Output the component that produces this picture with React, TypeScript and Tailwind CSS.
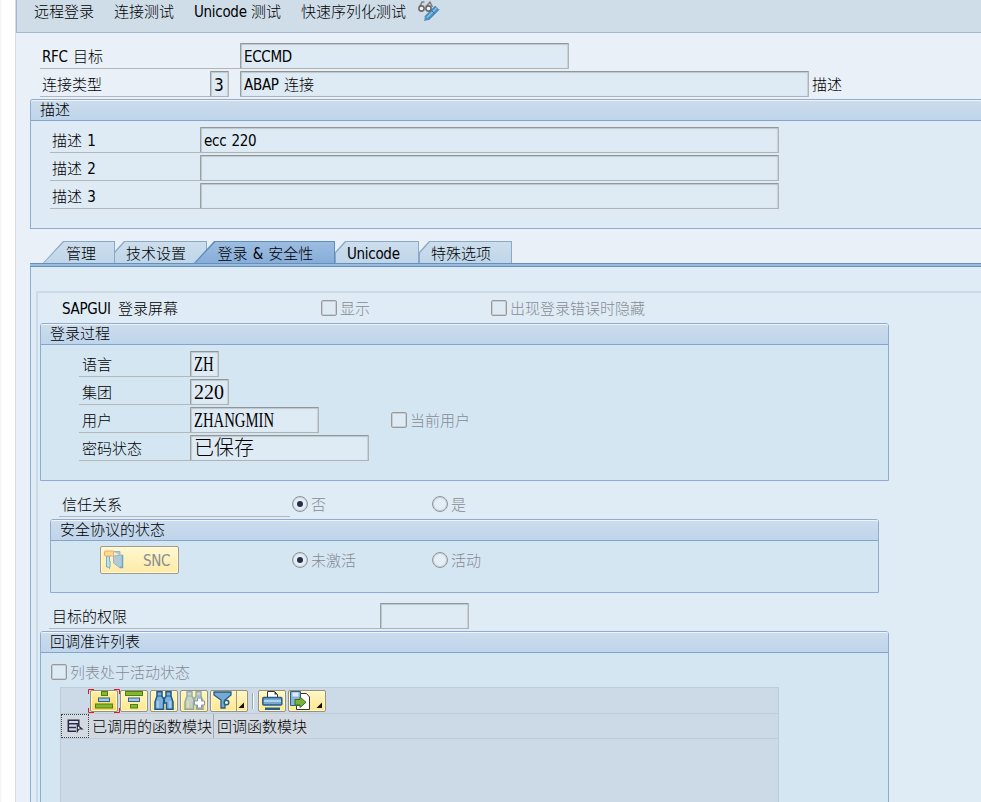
import type { ReactNode } from 'react'
import clsx from 'clsx'

// Latin runs are set slightly tighter than the CJK text around them
function Text({ children, className }: { children: string; className?: string }) {
  const parts = children.split(/([\x21-\x7e]+)/)
  return (
    <span className={clsx('whitespace-pre', className)}>
      {parts.map((part, i) => (i % 2 ? <span key={i} className="tracking-[-0.3px]">{part}</span> : part))}
    </span>
  )
}

interface FieldProps {
  value?: string
  className: string
  serif?: boolean
}

function Field({ value = '', className, serif }: FieldProps) {
  return (
    <div
      className={clsx(
        'flex h-[26px] shrink-0 items-center rounded-[1px] border border-[#b0b2b4] border-t-[#919798] border-l-[#999ea0] bg-[#deebf5] pl-[3px] shadow-[inset_1px_1px_1px_#bcc8d0,inset_-1px_0_1px_#c8d0d6]',
        className,
      )}
    >
      {serif ? (
        <span
          className={clsx(
            'origin-left font-["Liberation_Serif","Noto_Sans_CJK_SC",serif] text-[20px] whitespace-pre',
            /^[A-Z]+$/.test(value) && 'scale-x-[0.735]',
          )}
        >
          {value}
        </span>
      ) : (
        <Text className="pt-[2px] [word-spacing:1px]">{value}</Text>
      )}
    </div>
  )
}

function Label({ children, className }: { children: string; className: string }) {
  return (
    <div className={clsx('flex h-[26px] shrink-0 items-center border-b border-[#b4b6b8] pt-[2px]', className)}>
      <Text className="[word-spacing:1px]">{children}</Text>
    </div>
  )
}

function Check({ label, className }: { label: string; className?: string }) {
  return (
    <div className={clsx('flex h-[26px] shrink-0 items-center gap-[3px] text-[#868b94]', className)}>
      <span className="size-4 rounded-[2px] border border-[#999] bg-[#deebf5] shadow-[inset_0_0_0_1px_#c8ced4]" />
      <Text className="pt-px">{label}</Text>
    </div>
  )
}

function Radio({ label, checked, className }: { label: string; checked?: boolean; className?: string }) {
  return (
    <div className={clsx('flex h-[26px] shrink-0 items-center gap-[3px] text-[#868b94]', className)}>
      <span className="flex size-4 items-center justify-center rounded-full border border-[#8d939a] bg-[#e4eef7] shadow-[inset_0_0_0_1px_#cbd2d8]">
        {checked && <span className="size-1.5 rounded-full bg-[#2b2b47]" />}
      </span>
      <Text className="pt-px">{label}</Text>
    </div>
  )
}

function Group({ title, className, children }: { title: string; className?: string; children: ReactNode }) {
  return (
    <section className={clsx('rounded-t-[3px] border border-[#8facd0]', className)}>
      <h2 className="flex h-[21px] items-center rounded-t-[2px] border-b border-[#84a5cb] bg-linear-to-b from-[#ccdcec] to-[#bfd5eb] pl-[9px] shadow-[inset_0_1px_0_#eef4fa]">
        <Text>{title}</Text>
      </h2>
      {children}
    </section>
  )
}

interface TabProps {
  label: string
  className: string
  active?: boolean
  first?: boolean
}

function Tab({ label, className, active, first }: TabProps) {
  const wide = active || first
  const shape = wide
    ? '[clip-path:polygon(0_100%,21px_0,100%_0,100%_100%)]'
    : '[clip-path:polygon(0_11px,10px_0,100%_0,100%_100%,0_100%)]'
  return (
    <div
      className={clsx(
        'h-[23px] shrink-0 pt-px pr-px',
        shape,
        active ? 'relative bg-[#5f8fc0] pl-[1.5px]' : 'bg-[#8aa9c6] pl-px',
        className,
      )}
    >
      <div
        className={clsx(
          'flex h-full items-center bg-linear-to-b pt-[2px]',
          shape,
          active ? 'from-[#9dbde0] to-[#86acd8]' : 'from-[#cddeed] to-[#bfd5e9]',
          wide ? 'pl-[23px]' : 'pl-[11px]',
        )}
      >
        <Text className="[word-spacing:1px]">{label}</Text>
      </div>
    </div>
  )
}

function ToolButton({ children, className, focused }: { children: ReactNode; className?: string; focused?: boolean }) {
  return (
    <button
      className={clsx(
        'flex h-[22px] shrink-0 items-start rounded-[2px] border border-[#98917c] shadow-[inset_0_0_0_1px_#fff8cf]',
        focused ? 'bg-linear-to-b from-[#fff0a8] to-[#ffd458]' : 'bg-linear-to-b from-[#fff7c6] to-[#ffe78e]',
        className,
      )}
    >
      {children}
    </button>
  )
}

function GlassesPencil() {
  return (
    <svg width="22" height="22" viewBox="0 0 22 22" fill="none" className="-mt-[2px]">
      <path d="M2 6.500 4 2h2.500M8 6.500l4-4.500 2.500 5" stroke="#808080" strokeWidth="1.500" />
      <circle cx="3.500" cy="8.500" r="2.600" fill="#f5f5f5" stroke="#6b6b6b" strokeWidth="1.600" />
      <circle cx="10.500" cy="8.500" r="2.600" fill="#f5f5f5" stroke="#6b6b6b" strokeWidth="1.600" />
      <path d="M7 16.500 17.500 6l3.500 3.500L10.500 20 6 21z" fill="#4d94c6" />
      <path d="M7 16.500 17.500 6M10.500 20 21 9.500" stroke="#2a73a8" />
      <path d="M9 17.500 18.500 8" stroke="#8dc0e2" strokeWidth="1.500" />
      <path d="m13 10 4 4" stroke="#2a73a8" />
    </svg>
  )
}

function KeysIcon() {
  return (
    <svg width="20" height="20" viewBox="0 0 20 20">
      <path d="M9 1.500h7v4M18.500 5v12l-3 .5-6-4.500V6z" fill="#b4c9da" stroke="#9fb3c0" />
      <path d="M18.500 5v12.500h-3" fill="none" stroke="#69a8c8" strokeWidth="1.500" />
      <path d="M2.500 6v11h2l1 1.500V17l1-1-1-1 1-1-1-1 1-1-1-1V6z" fill="#c6e0ea" stroke="#6fafc9" />
      <rect x=".5" y="1" width="9" height="5" rx="1" fill="#ffdb8c" stroke="#eba873" />
    </svg>
  )
}

function Binoculars({ plus }: { plus?: boolean }) {
  return (
    <svg width="26" height="20" viewBox="0 0 26 20">
      <g opacity={plus ? 0.45 : 1}>
        <path
          d="M6 .7h5V5l1 2h2l1-2V.7h5V5l2 6v7.300h-6.500V12h-3v6.300H4V11l2-6z"
          fill="#7fb0dc"
          stroke="#1c598c"
          strokeWidth="1.500"
        />
        <path d="M6 5h5M15 5h5M12.500 7v5h1V7" stroke="#1c598c" fill="none" />
        <path d="M7 10v7M19 10v7" stroke="#b5d3ea" strokeWidth="1.500" />
      </g>
      {plus && <path d="M16.500 7h4v3h3v4h-3v3h-4v-3h-3v-4h3z" fill="#fff" stroke="#8195b5" />}
    </svg>
  )
}

function SortIcon({ down }: { down?: boolean }) {
  return (
    <svg width="26" height="20" viewBox="0 0 26 20">
      {down ? (
        <>
          <rect x="4.500" y=".5" width="17" height="4" fill="#86b82c" stroke="#4c801d" />
          <rect x="7.500" y="7" width="11" height="3.500" fill="#a6c5e2" stroke="#2b648d" />
          <rect x="9.500" y="13.500" width="7" height="3.500" fill="#86b82c" stroke="#4c801d" />
        </>
      ) : (
        <>
          <rect x="10.500" y=".5" width="6" height="4" fill="#86b82c" stroke="#4c801d" />
          <rect x="7.500" y="7" width="11" height="3.500" fill="#a6c5e2" stroke="#2b648d" />
          <rect x="4.500" y="13" width="17" height="4" fill="#86b82c" stroke="#4c801d" />
        </>
      )}
    </svg>
  )
}

function FilterIcon() {
  return (
    <svg width="36" height="20" viewBox="0 0 36 20">
      <path d="M3 1h17v3l-6 5v8h-4V9L3 4z" fill="#77a9d2" stroke="#225e8e" strokeWidth="1.300" />
      <circle cx="15.500" cy="11.500" r="2.300" fill="#f4efcf" stroke="#225e8e" strokeWidth="1.500" />
      <path d="M25.500 0v20" stroke="#a39a78" />
      <path d="M33 11.500v5.500h-5.500z" fill="#111" />
    </svg>
  )
}

function PrinterIcon() {
  return (
    <svg width="26" height="20" viewBox="0 0 26 20">
      <path d="M8.500 6V.5h7l3 3V6" fill="#fff" stroke="#333" />
      <path d="M15.500 0v3.500h3z" fill="#333" />
      <rect x="3.800" y="6.500" width="19" height="7.500" rx="1" fill="#78a8d0" stroke="#225e8e" strokeWidth="1.500" />
      <path d="M5 10h17" stroke="#c7dff1" strokeWidth="1.500" />
      <path d="M6 16.500h15V19H6z" fill="#225e8e" />
    </svg>
  )
}

function ExportIcon() {
  return (
    <svg width="36" height="20" viewBox="0 0 36 20">
      <path d="M7.500 2.500h10l3 3.500v12.500h-13z" fill="#fff" stroke="#333" />
      <path d="M1.500.5h10v14h-10z" fill="#8bb3d8" stroke="#2b648d" />
      <path d="M3.500 1.500h6v4h-6z" fill="#dceaf6" />
      <path d="M6 8.500h5V6l6 5.300-6 5.200V14H6z" fill="#7bb135" stroke="#39701b" />
      <path d="M33 11.500v5.500h-5.500z" fill="#111" />
    </svg>
  )
}

function SelectAllIcon() {
  return (
    <svg width="17" height="14" viewBox="0 0 17 14" fill="none" stroke="#2b2b47" strokeWidth="1.500">
      <path d="M9 12.300H1.300V1.300h10.500V7M1.300 4.800h10.500M1.300 8.500H9" />
      <path d="M10.300 6 15 10h-3l-1.700 2.500z" fill="#fff" strokeWidth="1.200" />
    </svg>
  )
}

const descriptions = ['ecc 220', '', '']

const logonFields = [
  { label: '语言', value: 'ZH', width: 'w-[29px]' },
  { label: '集团', value: '220', width: 'w-[39px]' },
  { label: '用户', value: 'ZHANGMIN', width: 'w-[129px]' },
  { label: '密码状态', value: '已保存', width: 'w-[179px]' },
]

export default function App() {
  return (
    <div className='flex h-[802px] w-[981px] overflow-hidden bg-white font-["DejaVu_Sans_Condensed","Noto_Sans_CJK_SC",sans-serif] text-[15px] leading-5 font-light text-black'>
      <div className="w-4 shrink-0 border-r border-[#d3dce7] bg-linear-to-r from-[#f6f6f6] from-[1px] to-white to-[2px]" />
      <div className="flex min-w-0 flex-1 flex-col bg-[#e9f0f7]">
        <nav className="flex h-[33px] shrink-0 border-b border-l border-[#a3b8d0] bg-[#cfdde8] pt-[2px] pl-[17px]">
          <Text className="w-20">远程登录</Text>
          <Text className="w-20">连接测试</Text>
          <Text className="w-[107px]">Unicode 测试</Text>
          <Text className="w-[117px]">快速序列化测试</Text>
          <GlassesPencil />
        </nav>

        <main className="flex flex-1 flex-col pt-2.5 pl-3.5">
          <div className="flex flex-col gap-0.5 pl-2.5">
            <div className="flex">
              <Label className="w-[200px] pl-[2px]">RFC 目标</Label>
              <Field value="ECCMD" className="w-[329px]" />
            </div>
            <div className="flex">
              <Label className="w-[170px] pl-[2px]">连接类型</Label>
              <Field value="3" className="mr-[11px] w-[19px] text-[17px]" />
              <Field value="ABAP 连接" className="w-[569px]" />
              <Text className="pt-1 pl-[3px]">描述</Text>
            </div>
          </div>

          <Group title="描述" className="mt-0.5 h-[130px] shrink-0 rounded-tr-none border-r-0 bg-[#deeaf4]">
            <div className="flex flex-col gap-0.5 pt-1.5 pl-[19px]">
              {descriptions.map((value, i) => (
                <div key={i} className="flex">
                  <Label className="w-[150px] pl-[2px]">{`描述 ${i + 1}`}</Label>
                  <Field value={value} className="w-[579px]" />
                </div>
              ))}
            </div>
          </Group>

          <div className="mt-3 flex h-[22px] shrink-0 pl-3">
            <Tab label="管理" className="w-[73px]" first />
            <Tab label="技术设置" className="-ml-px w-[93px]" />
            <Tab label="登录 & 安全性" className="-ml-3.5 w-[142px]" active />
            <Tab label="Unicode" className="w-[84px]" />
            <Tab label="特殊选项" className="w-[93px]" />
          </div>
          <div className="relative h-1 shrink-0 border-y border-[#6490bd] bg-[#9bbbdd]" />

          <div className="flex flex-1 flex-col border-l border-[#8facd0] bg-[#dfebf5] pt-6 pl-[5px]">
            <div className="flex-1 border-t-2 border-l-2 border-[#cddbe8] pt-[2px] pl-[2px]">
              <div className="flex">
                <div className="flex h-[26px] w-[281px] items-center pt-px pl-[22px]">
                  <Text className="[word-spacing:3px]">SAPGUI 登录屏幕</Text>
                </div>
                <Check label="显示" className="w-[170px]" />
                <Check label="出现登录错误时隐藏" />
              </div>

              <Group title="登录过程" className="mt-0.5 h-[158px] w-[849px] bg-[#d5e6f3]">
                <div className="flex flex-col gap-0.5 pt-1.5 pl-[38px]">
                  {logonFields.map(field => (
                    <div key={field.label} className="flex">
                      <Label className="w-[111px] pl-[3px]">{field.label}</Label>
                      <Field value={field.value} className={field.width} serif />
                      {field.value === 'ZHANGMIN' && <Check label="当前用户" className="ml-[72px]" />}
                    </div>
                  ))}
                </div>
              </Group>

              <div className="mt-2.5 flex pl-[19px]">
                <Label className="w-[231px] pl-[3px]">信任关系</Label>
                <Radio label="否" checked className="ml-[2px] w-[140px]" />
                <Radio label="是" />
              </div>

              <Group title="安全协议的状态" className="mt-0.5 ml-2.5 h-[74px] w-[829px] bg-[#d5e6f3]">
                <div className="flex pt-[5px] pl-[49px]">
                  <button className="flex h-7 w-[79px] items-center rounded-[2px] border border-[#a39a88] bg-linear-to-b from-[#fff8d0] to-[#fdeaa5] pl-[3px] text-[#8a8d92] shadow-[inset_0_0_0_1px_#fff9d8]">
                    <KeysIcon />
                    <Text className="pt-px pl-[19px]">SNC</Text>
                  </button>
                  <Radio label="未激活" checked className="mt-px ml-[113px] w-[140px]" />
                  <Radio label="活动" className="mt-px" />
                </div>
              </Group>

              <div className="mt-2.5 flex pl-[9px]">
                <Label className="w-[331px] pl-[3px]">目标的权限</Label>
                <Field className="w-[89px]" />
              </div>

              <Group title="回调准许列表" className="mt-0.5 h-[200px] w-[849px] bg-[#d5e6f3]">
                <Check label="列表处于活动状态" className="mt-1.5 ml-2.5" />
                <div className="mt-[2px] ml-[19px] h-[140px] w-[719px] border border-[#bdcbda] bg-[#ccd9e7]">
                  <div className="flex h-[26px] items-center gap-0.5 border-b border-[#bdcbda] pl-[29px]">
                    <div className="relative z-10">
                      <ToolButton className="w-7" focused>
                        <SortIcon />
                      </ToolButton>
                      <svg className="absolute -top-px -left-[2px]" width="32" height="24" fill="none" stroke="#e8141c">
                        <path d="M.5 5V.5H6M26 .5h5.500V5M.5 19v4.500H6M26 23.500h5.500V19" />
                      </svg>
                    </div>
                    <ToolButton className="w-7">
                      <SortIcon down />
                    </ToolButton>
                    <ToolButton className="w-7">
                      <Binoculars />
                    </ToolButton>
                    <ToolButton className="w-7">
                      <Binoculars plus />
                    </ToolButton>
                    <ToolButton className="w-[38px]">
                      <FilterIcon />
                    </ToolButton>
                    <span className="mx-[2px] h-4 w-[2px] border-l border-[#9aa5b0] bg-white" />
                    <ToolButton className="w-7">
                      <PrinterIcon />
                    </ToolButton>
                    <ToolButton className="w-[38px]">
                      <ExportIcon />
                    </ToolButton>
                  </div>
                  <div className="flex h-[25px] border-b border-[#bdcbda]">
                    <span className="flex w-7 items-center justify-center border border-dotted border-[#444] bg-[#d3dae2]">
                      <SelectAllIcon />
                    </span>
                    <span className="flex w-[125px] items-center border-r border-[#9fa9b4] bg-[#d2d9e1] pt-px pl-[3px]">
                      <Text>已调用的函数模块</Text>
                    </span>
                    <span className="flex w-[95px] items-center bg-[#d2d9e1] pt-px pl-[3px]">
                      <Text>回调函数模块</Text>
                    </span>
                  </div>
                </div>
              </Group>
            </div>
          </div>
        </main>
      </div>
    </div>
  )
}
